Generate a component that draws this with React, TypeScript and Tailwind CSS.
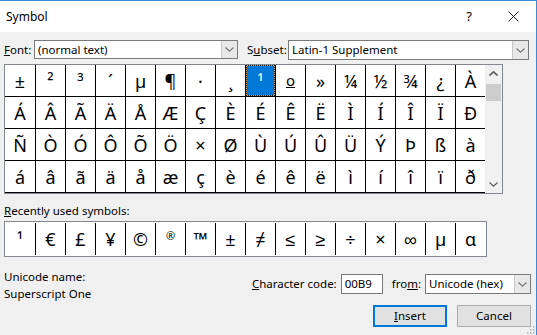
import React from 'react';

const rows: string[][] = [
  ['±', '²', '³', '´', 'µ', '¶', '·', '¸', '¹', 'º', '»', '¼', '½', '¾', '¿', 'À'],
  ['Á', 'Â', 'Ã', 'Ä', 'Å', 'Æ', 'Ç', 'È', 'É', 'Ê', 'Ë', 'Ì', 'Í', 'Î', 'Ï', 'Ð'],
  ['Ñ', 'Ò', 'Ó', 'Ô', 'Õ', 'Ö', '×', 'Ø', 'Ù', 'Ú', 'Û', 'Ü', 'Ý', 'Þ', 'ß', 'à'],
  ['á', 'â', 'ã', 'ä', 'å', 'æ', 'ç', 'è', 'é', 'ê', 'ë', 'ì', 'í', 'î', 'ï', 'ð'],
];

const recent = ['¹', '€', '£', '¥', '©', '®', '™', '±', '≠', '≤', '≥', '÷', '×', '∞', 'µ', 'α'];

const Chevron = ({ up = false, color = '#606060' }: { up?: boolean; color?: string }) => (
  <svg width="9" height="5" viewBox="0 0 9 5">
    <path
      d={up ? 'M0.5 4.5 L4.5 0.8 L8.5 4.5' : 'M0.5 0.5 L4.5 4.2 L8.5 0.5'}
      fill="none"
      stroke={color}
      strokeWidth={up ? 1.6 : 1.2}
    />
  </svg>
);

const Combo = ({ value, width, height = 'h-[19px]' }: { value: string; width: string; height?: string }) => (
  <div className={`flex ${width} ${height} border border-[#7a7a7a] bg-white`}>
    <div className="flex flex-1 items-center pl-[3px] text-[11.5px] text-black">{value}</div>
    <div className="flex w-[16px] items-center justify-center border-l border-[#c8c8c8] bg-[#e8e8e8]">
      <Chevron color="#7a7a7a" />
    </div>
  </div>
);

const Glyph = ({ ch }: { ch: string }) => {
  if (ch === 'º') {
    return <span className="border-b border-black pb-[1px] text-[15px] leading-[12px]">o</span>;
  }
  if (ch === '®') {
    return <span className="mb-[8px] text-[11px] leading-none">®</span>;
  }
  return <>{ch}</>;
};

export default function App() {
  return (
    <div className="flex h-[335px] w-[537px] flex-col overflow-hidden border-t border-r border-[#3c89d6] bg-[#f0f0f0] font-['Noto_Sans',sans-serif] text-[11.5px] text-black">
      {/* title bar */}
      <div className="flex h-[31px] items-center bg-white pl-[6px]">
        <span className="text-[12px]">Symbol</span>
        <span className="ml-auto w-[14px] text-center text-[13px]">?</span>
        <span className="ml-[31px] mr-[17px] flex w-[12px] justify-center">
          <svg width="11" height="11" viewBox="0 0 11 11">
            <path d="M0.5 0.5 L10.5 10.5 M10.5 0.5 L0.5 10.5" stroke="#1a1a1a" strokeWidth="1" />
          </svg>
        </span>
      </div>

      <div className="flex flex-col px-[4px]">
        {/* font / subset row */}
        <div className="mt-[8px] flex items-start">
          <span className="flex h-[19px] w-[30px] items-center">
            <span className="underline">F</span>ont:
          </span>
          <Combo value="(normal text)" width="w-[204px]" />
          <span className="ml-[9px] flex h-[19px] w-[41px] items-center">
            S<span className="underline">u</span>bset:
          </span>
          <Combo value="Latin-1 Supplement" width="w-[241px]" height="h-[20px]" />
        </div>

        {/* symbol grid */}
        <div className="mt-[4px] flex w-[499px] border border-[#828790] bg-white">
          <div className="flex w-[480px] flex-col">
            {rows.map((row, r) => (
              <div key={r} className="flex h-[32px] border-b border-black">
                {row.map((ch, c) => {
                  const selected = r === 0 && c === 8;
                  return (
                    <div
                      key={c}
                      className={`flex h-full w-[30px] items-center justify-center text-[18px] leading-none ${
                        c > 0 ? 'border-l border-black' : ''
                      }`}
                    >
                      {selected ? (
                        <div className="h-full w-full bg-[#e39a3c]">
                          <div className="flex h-full w-full items-center justify-center border border-dotted border-[#222] bg-[#0078d7] bg-clip-padding text-white">
                            {ch}
                          </div>
                        </div>
                      ) : (
                        <Glyph ch={ch} />
                      )}
                    </div>
                  );
                })}
              </div>
            ))}
          </div>
          {/* scrollbar */}
          <div className="flex w-[17px] flex-col items-center bg-[#f0f0f0]">
            <div className="flex h-[17px] items-center justify-center">
              <Chevron up />
            </div>
            <div className="mt-[2px] h-[17px] w-[15px] bg-[#cdcdcd]" />
            <div className="mt-auto flex h-[17px] items-center justify-center">
              <Chevron />
            </div>
          </div>
        </div>

        {/* recently used */}
        <div className="mt-[10px] leading-[14px]">
          <span className="underline">R</span>ecently used symbols:
        </div>
        <div className="mt-[3px] flex w-[483px] border border-[#828790] bg-white py-[1px]">
          {recent.map((ch, i) => (
            <div
              key={i}
              className={`flex h-[32px] w-[30px] items-center justify-center text-[18px] leading-none ${
                i > 0 ? 'border-l border-black' : ''
              }`}
            >
              <Glyph ch={ch} />
            </div>
          ))}
        </div>

        {/* bottom */}
        <div className="flex">
          <div className="flex flex-col pt-[11px] leading-[17px]">
            <span>Unicode name:</span>
            <span>Superscript One</span>
          </div>
          <div className="ml-auto flex flex-col items-end pt-[17px] pr-[1px]">
            <div className="flex h-[20px] items-center">
              <span>
                <span className="underline">C</span>haracter code:
              </span>
              <div className="ml-[4px] flex h-[20px] w-[42px] items-center border border-[#7a7a7a] bg-white pl-[3px]">
                00B9
              </div>
              <span className="ml-[9px]">
                fro<span className="underline">m</span>:
              </span>
              <div className="ml-[4px]">
                <Combo value="Unicode (hex)" width="w-[106px]" height="h-[20px]" />
              </div>
            </div>
            <div className="mt-[11px] flex gap-[10px]">
              <button className="flex h-[22px] w-[74px] items-center justify-center border-2 border-[#0078d7] bg-[#e1e1e1]">
                <span className="underline">I</span>nsert
              </button>
              <button className="flex h-[22px] w-[74px] items-center justify-center border border-[#adadad] bg-[#e1e1e1]">
                Cancel
              </button>
            </div>
          </div>
        </div>
      </div>
      <div className="relative flex-1">
        <svg className="absolute right-[1px] bottom-[1px]" width="8" height="8" viewBox="0 0 8 8">
          <rect x="6" y="0" width="1.5" height="1.5" fill="#b0b0b0" />
          <rect x="3" y="3" width="1.5" height="1.5" fill="#b0b0b0" />
          <rect x="6" y="3" width="1.5" height="1.5" fill="#b0b0b0" />
          <rect x="0" y="6" width="1.5" height="1.5" fill="#b0b0b0" />
          <rect x="3" y="6" width="1.5" height="1.5" fill="#b0b0b0" />
          <rect x="6" y="6" width="1.5" height="1.5" fill="#b0b0b0" />
        </svg>
      </div>
    </div>
  );
}
